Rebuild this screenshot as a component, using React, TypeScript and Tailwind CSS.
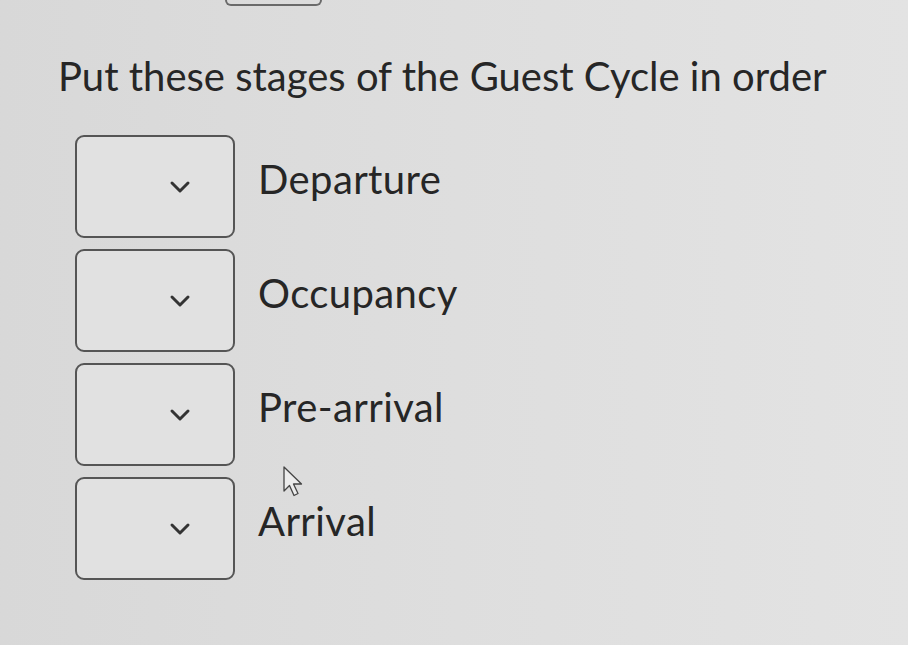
import React from "react";

const stages = ["Departure", "Occupancy", "Pre-arrival", "Arrival"];

const Chevron = () => (
  <svg width="24" height="18" viewBox="0 0 24 18" fill="none">
    <path d="M4 5l8 8 8-8" stroke="#333" strokeWidth="3" strokeLinecap="round" strokeLinejoin="round" />
  </svg>
);

const Pointer = () => (
  <svg width="22" height="32" viewBox="0 0 22 32" fill="none">
    <path
      d="M2 2v24l5.5-5.5 4.5 10 4-2-4.5-9.5h8L2 2z"
      fill="#ececec"
      stroke="#444"
      strokeWidth="1.3"
      strokeLinejoin="round"
    />
  </svg>
);

const App = () => {
  return (
    <div
      className="w-[908px] h-[645px] overflow-hidden bg-gradient-to-r from-[#d8d8d8] via-[#dedede] to-[#e3e3e3] text-[#262626]"
      style={{ fontFamily: "Lato, 'Open Sans', sans-serif" }}
    >
      {/* bottom edge of the previous question's field */}
      <div className="ml-[225px] w-[97px] h-[6px] border-x-2 border-b-2 border-[#6a6a6a] rounded-b-md" />

      <h1 className="ml-[58px] mt-[46px] text-[40px] leading-[48px]">
        Put these stages of the Guest Cycle in order
      </h1>

      <div className="relative mt-[35px] ml-[75px] flex flex-col gap-[11px]">
        {stages.map((stage) => (
          <div key={stage} className="flex items-center gap-[23px]">
            <div className="w-[160px] h-[103px] rounded-[9px] border-2 border-[#555] bg-[#e1e1e1] flex items-center justify-end pr-[41px]">
              <Chevron />
            </div>
            <span className="text-[40px] leading-none tracking-[0.4px] -mt-[16px]">{stage}</span>
          </div>
        ))}
        <div className="absolute left-[207px] top-[330px]">
          <Pointer />
        </div>
      </div>
    </div>
  );
};

export default App;
